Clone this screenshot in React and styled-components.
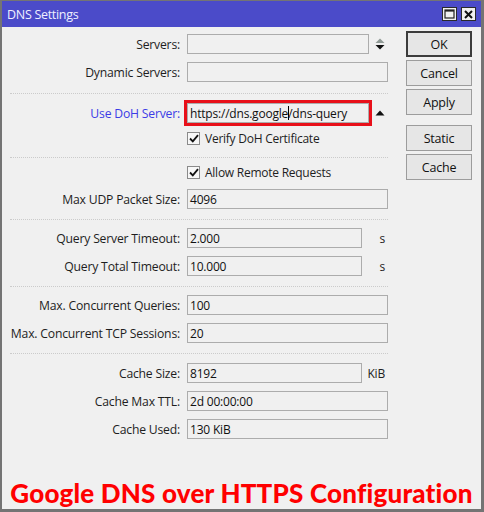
import React from "react";
import styled, { createGlobalStyle } from "styled-components";

const Global = createGlobalStyle`
  html, body { margin: 0; padding: 0; background: #f0f0f0; }
  body { font-family: "Open Sans", "Noto Sans", sans-serif; }
  #root { width: 484px; height: 512px; }
`;

const Window = styled.div`
  box-sizing: border-box;
  width: 484px;
  height: 512px;
  display: flex;
  flex-direction: column;
  background: #f0f0f0;
  border-left: 2px solid #747474;
  border-right: 3px solid #747474;
  border-bottom: 3px solid #747474;
  border-top: 1px solid #747474;
`;

const TitleBar = styled.div`
  height: 26px;
  flex: none;
  display: flex;
  align-items: center;
  justify-content: space-between;
  background: #4b4bc9;
  padding: 0 3px 0 5px;
`;

const Title = styled.span`
  color: #eef0ff;
  font-size: 12.5px;
  letter-spacing: -0.3px;
`;

const TitleButtons = styled.div`
  display: flex;
  gap: 4px;
  margin-right: 2px;
`;

const TitleBtn = styled.div`
  box-sizing: border-box;
  width: 15px;
  height: 14px;
  background: #f0f0f0;
  border: 1px solid #2a2a2a;
  display: flex;
  align-items: center;
  justify-content: center;
`;

const Body = styled.div`
  display: flex;
  flex: none;
`;

const Form = styled.div`
  width: 386px;
  display: flex;
  flex-direction: column;
`;

const Section = styled.div`
  display: flex;
  flex-direction: column;
  padding-top: ${(p) => p.$top || 0}px;
  padding-bottom: ${(p) => p.$bottom || 0}px;
`;

const Separator = styled.div`
  height: 0;
  margin-left: 8px;
  border-top: 1px dotted #cbcbcb;
`;

const Row = styled.div`
  display: grid;
  grid-template-columns: 178px 201px;
  column-gap: 7px;
  align-items: center;
  height: ${(p) => p.$h || 28}px;
`;

const Label = styled.span`
  text-align: right;
  font-size: 12.2px;
  color: ${(p) => (p.$blue ? "#3c3ce6" : "#1e1e1e")};
  white-space: nowrap;
  letter-spacing: -0.2px;
`;

const Field = styled.div`
  display: flex;
  align-items: center;
`;

const Input = styled.div`
  box-sizing: border-box;
  width: ${(p) => p.$w || 201}px;
  height: 20px;
  flex: none;
  border: 1px solid #acacac;
  background: #f0f0f0;
  font-size: 12px;
  color: #111;
  padding: 0 2px;
  display: flex;
  align-items: center;
  white-space: nowrap;
  letter-spacing: -0.2px;
  ${(p) => p.$mark && `outline: 3px solid #e8101a; outline-offset: 0px;`}
`;

const Caret = styled.span`
  display: inline-block;
  width: 1px;
  height: 14px;
  background: #000;
  margin: 0 -1px 0 0;
  vertical-align: middle;
`;

const Unit = styled.span`
  flex: 1;
  text-align: right;
  padding-right: 3px;
  font-size: 12px;
  color: #222;
  letter-spacing: -0.2px;
`;

const ArrowBox = styled.div`
  flex: 1;
  display: flex;
  justify-content: center;
  padding-left: 2px;
`;

const CheckLine = styled.label`
  display: flex;
  align-items: center;
  gap: 5px;
  font-size: 12px;
  color: #1e1e1e;
  letter-spacing: -0.25px;
`;

const Box = styled.span`
  box-sizing: border-box;
  width: 13px;
  height: 13px;
  border: 1px solid #8a8a8a;
  background: #f7f7f7;
  display: inline-flex;
  align-items: center;
  justify-content: center;
`;

const ButtonCol = styled.div`
  margin-left: 18px;
  padding-top: 4px;
  display: flex;
  flex-direction: column;
  width: 66px;
`;

const Button = styled.div`
  box-sizing: border-box;
  height: 26px;
  margin-bottom: ${(p) => p.$gap ?? 3}px;
  display: flex;
  align-items: center;
  justify-content: center;
  background: #e6e6e6;
  border: ${(p) => (p.$default ? "2px solid #3c3c3c" : "1px solid #9c9c9c")};
  font-size: 12.5px;
  color: #111;
  letter-spacing: -0.2px;
`;

const Footer = styled.div`
  flex: 1;
  display: flex;
  align-items: flex-end;
  justify-content: center;
  padding-bottom: 1px;
`;

const Caption = styled.div`
  font-family: "Lato", "Noto Sans", sans-serif;
  font-weight: 900;
  font-size: 26px;
  line-height: 30px;
  color: #ff0000;
  letter-spacing: 0.2px;
  white-space: nowrap;
`;

const Check = () => (
  <Box>
    <svg width="10" height="9" viewBox="0 0 10 9">
      <path d="M1 4.5 L3.8 7.3 L9 1.2" fill="none" stroke="#111" strokeWidth="1.8" />
    </svg>
  </Box>
);

const UpDown = () => (
  <svg width="10" height="12" viewBox="0 0 10 12">
    <path d="M0.5 5 L5 0.5 L9.5 5 Z" fill="#909a96" />
    <path d="M0.5 7 L5 11.5 L9.5 7 Z" fill="#111" />
  </svg>
);

const Up = () => (
  <svg width="10" height="6" viewBox="0 0 10 6">
    <path d="M0.5 5.5 L5 0.5 L9.5 5.5 Z" fill="#111" />
  </svg>
);

const Field1 = ({ label, value, w, unit, blue, children, mark }) => (
  <Row>
    <Label $blue={blue}>{label}</Label>
    <Field>
      <Input $w={w} $mark={mark}>{children ?? value}</Input>
      {unit && <Unit>{unit}</Unit>}
    </Field>
  </Row>
);

export default function App() {
  return (
    <>
      <Global />
      <Window>
        <TitleBar>
          <Title>DNS Settings</Title>
          <TitleButtons>
            <TitleBtn>
              <svg width="11" height="10" viewBox="0 0 11 10">
                <rect x="1" y="1" width="9" height="8" fill="none" stroke="#222" strokeWidth="1.2" />
                <rect x="1" y="1" width="9" height="1.6" fill="#222" />
              </svg>
            </TitleBtn>
            <TitleBtn>
              <svg width="9" height="9" viewBox="0 0 9 9">
                <path d="M1 1 L8 8 M8 1 L1 8" stroke="#111" strokeWidth="2" />
              </svg>
            </TitleBtn>
          </TitleButtons>
        </TitleBar>
        <Body>
          <Form>
            <Section $top={3} $bottom={7}>
              <Row>
                <Label>Servers:</Label>
                <Field>
                  <Input $w={182} />
                  <ArrowBox>
                    <UpDown />
                  </ArrowBox>
                </Field>
              </Row>
              <Field1 label="Dynamic Servers:" />
            </Section>
            <Separator />
            <Section $top={5} $bottom={7}>
              <Row>
                <Label $blue>Use DoH Server:</Label>
                <Field>
                  <Input $w={182} $mark>
                    https://dns.google<Caret />/dns-query
                  </Input>
                  <ArrowBox>
                    <Up />
                  </ArrowBox>
                </Field>
              </Row>
              <Row $h={23}>
                <span />
                <CheckLine>
                  <Check />
                  Verify DoH Certificate
                </CheckLine>
              </Row>
            </Section>
            <Separator />
            <Section $top={2} $bottom={6}>
              <Row $h={25}>
                <span />
                <CheckLine>
                  <Check />
                  Allow Remote Requests
                </CheckLine>
              </Row>
              <Field1 label="Max UDP Packet Size:" value="4096" />
            </Section>
            <Separator />
            <Section $top={4} $bottom={6}>
              <Field1 label="Query Server Timeout:" value="2.000" w={175} unit="s" />
              <Field1 label="Query Total Timeout:" value="10.000" w={175} unit="s" />
            </Section>
            <Separator />
            <Section $top={4} $bottom={6}>
              <Field1 label="Max. Concurrent Queries:" value="100" />
              <Field1 label="Max. Concurrent TCP Sessions:" value="20" />
            </Section>
            <Separator />
            <Section $top={5}>
              <Field1 label="Cache Size:" value="8192" w={175} unit="KiB" />
              <Field1 label="Cache Max TTL:" value="2d 00:00:00" />
              <Field1 label="Cache Used:" value="130 KiB" />
            </Section>
          </Form>
          <ButtonCol>
            <Button $default>OK</Button>
            <Button>Cancel</Button>
            <Button $gap={10}>Apply</Button>
            <Button>Static</Button>
            <Button>Cache</Button>
          </ButtonCol>
        </Body>
        <Footer>
          <Caption>Google DNS over HTTPS Configuration</Caption>
        </Footer>
      </Window>
    </>
  );
}
